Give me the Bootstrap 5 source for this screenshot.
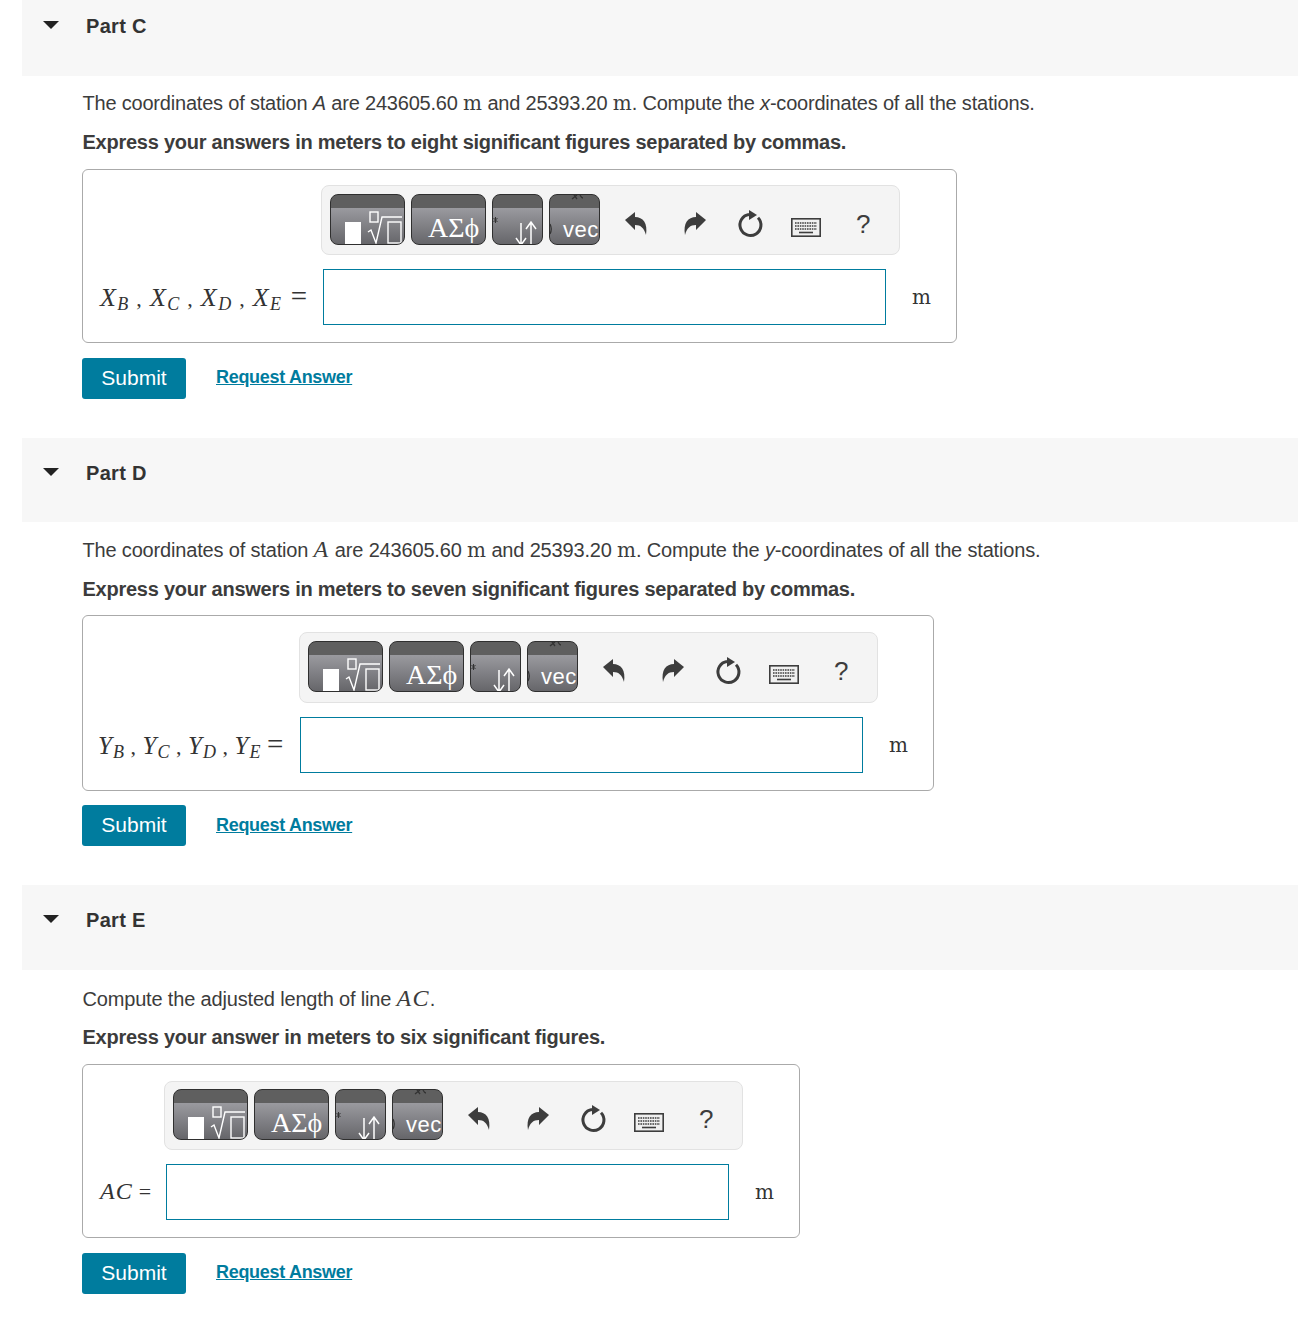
<!DOCTYPE html>
<html lang="en">
<head>
  <meta charset="UTF-8">
  <meta name="viewport" content="width=device-width, initial-scale=1.0">
  <title>Parts C to E</title>
  <link href="https://cdn.jsdelivr.net/npm/bootstrap@5.3.0/dist/css/bootstrap.min.css" rel="stylesheet">
  <style>
    body {
      background: #fff;
      color: #3c3c3c;
      font-family: "Liberation Sans", Arial, sans-serif;
      font-size: 20px;
      line-height: 28px;
      overflow-x: hidden;
    }

    .page-wrap { margin: -9px 0 0 22px; }

    .part-head {
      height: 85px;
      background: #f7f7f7;
      padding: 21px 0 0 21px;
      gap: 27px;
      font-weight: 700;
      letter-spacing: 0.3px;
      color: #333;
    }
    .part-d .part-head { height: 84px; }

    .part-caret {
      width: 0;
      height: 0;
      margin-top: 9px;
      border-style: solid;
      border-width: 8px 8px 0;
      border-color: #222 transparent transparent;
    }

    .part-body { padding: 13px 0 39px 60px; }
    .part-d .part-body { padding-top: 14px; }
    .part-e .part-body { padding-top: 15px; }
    .part-text { margin: 0 0 11px; padding-left: 0.5px; letter-spacing: -0.17px; }
    .part-c .part-text { letter-spacing: -0.2px; }
    .part-e .part-text { margin-bottom: 10px; }
    .part-ask { margin: 0 0 13px; padding-left: 0.5px; font-weight: 700; letter-spacing: -0.25px; }
    .part-d .part-ask { margin-bottom: 12px; }

    .mvar, .mrm {
      font-family: "Liberation Serif", "Times New Roman", serif;
      letter-spacing: 0;
      line-height: 1;
    }
    .mvar { font-style: italic; font-size: 24px; letter-spacing: 1.2px; }
    .mvar sub { font-size: 17px; bottom: -0.25em; letter-spacing: 0; }
    .mrm { font-size: 22px; }
    .math-label .mvar { font-size: 26px; letter-spacing: 1.4px; }
    .math-label .mvar sub { font-size: 18px; }
    .math-label .mrm { margin: 0 2.5px; }
    .part-d .math-label .mvar { font-size: 25px; letter-spacing: 1px; }
    .part-d .math-label .mrm { margin: 0 1px; }
    .part-e .math-label .mvar { font-size: 24px; letter-spacing: 1.2px; }
    .part-e .math-label .mrm { margin: 0; }
    .math-label .msign { font-size: 29px; margin-left: 4px; }
    .munit { font-family: "DejaVu Serif", serif; font-size: 20px; letter-spacing: 0; line-height: 1; }

    .answer-box {
      border: 1px solid #aaa;
      border-radius: 6px;
      padding: 15px 0 17px;
      display: grid;
      grid-template-columns: var(--label-w) 563px auto;
      row-gap: 14px;
      align-items: center;
    }
    .part-c .answer-box { --label-w: 240px; width: 875px; }
    .part-d .answer-box { --label-w: 217px; width: 852px; padding-top: 16px; }
    .part-e .answer-box { --label-w: 83px; width: 718px; padding-top: 16px; }

    .math-label { grid-column: 1; grid-row: 2; padding-left: 17px; white-space: nowrap; color: #333; }
    .part-d .math-label { padding-left: 15px; }
    .tool-bar {
      grid-column: 2;
      grid-row: 1;
      width: 579px;
      height: 70px;
      margin-left: -2px;
      padding: 8px 0 0 8px;
      background: #f4f4f4;
      border: 1px solid #e2e2e2;
      border-radius: 8px;
    }
    .part-d .tool-bar { height: 71px; margin-left: -1px; }
    .part-e .tool-bar { height: 69px; padding-top: 7px; }

    .tool-btn {
      position: relative;
      overflow: hidden;
      height: 51px;
      margin-right: 6px;
      color: #fff;
      border: 1px solid #2f2f2f;
      border-radius: 8px;
      background: linear-gradient(#5f5f5f 0 13px, #9a9a9f 13px, #66666a 100%);
    }
    .btn-wide { width: 75px; }
    .btn-thin { width: 51px; }
    .btn-glyph { position: absolute; white-space: nowrap; line-height: 1; }
    .btn-art { position: absolute; left: 0; top: 0; }
    .glyph-greek { left: 16px; top: 17px; font: 28px "Liberation Serif", serif; }
    .glyph-vec { left: 13px; top: 24px; font-size: 22px; letter-spacing: 0.5px; }

    .tool-icon { display: block; color: #3d3d3d; }
    .icon-undo { margin: 16px 0 0 18px; }
    .icon-redo { margin: 16px 0 0 35px; }
    .icon-reset { margin: 16px 0 0 30px; }
    .icon-keys { margin: 24px 0 0 26px; }
    .tool-help { margin: 17px 0 0 35px; font-size: 26px; line-height: 26px; color: #3d3d3d; }

    .answer-input {
      grid-column: 2;
      grid-row: 2;
      height: 56px;
      border: 1px solid #007c9e;
      outline: 0;
      background: #fff;
    }
    .unit-cell { grid-column: 3; grid-row: 2; padding-left: 26px; color: #333; }

    .action-row { margin-top: 15px; gap: 30px; }
    .part-d .action-row { margin-top: 14px; }
    .btn-submit {
      width: 104px;
      height: 41px;
      padding: 0 0 2px;
      border: 0;
      border-radius: 3px;
      background: #007c9e;
      color: #fff;
      font-size: 21px;
    }
    .btn-submit:hover { background: #006b88; color: #fff; }
    .answer-link {
      color: #007c9e;
      font-size: 18px;
      font-weight: 700;
      margin-top: -3px;
      letter-spacing: -0.3px;
    }
    .part-d .answer-link { margin-top: -2px; }
  </style>
</head>
<body>
  <div class="page-wrap">

    <section class="part-c">
      <div class="part-head d-flex"><span class="part-caret"></span><span>Part C</span></div>
      <div class="part-body">
        <p class="part-text">The coordinates of station <i>A</i> are 243605.60 <span class="munit">m</span> and 25393.20 <span class="munit">m</span>. Compute the <i>x</i>-coordinates of all the stations.</p>
        <p class="part-ask">Express your answers in meters to eight significant figures separated by commas.</p>
        <div class="answer-box">
          <div class="tool-bar d-flex" data-bar></div>
          <div class="math-label"><span class="mvar">X<sub>B</sub></span> <span class="mrm">,</span> <span class="mvar">X<sub>C</sub></span> <span class="mrm">,</span> <span class="mvar">X<sub>D</sub></span> <span class="mrm">,</span> <span class="mvar">X<sub>E</sub></span> <span class="mrm msign">=</span></div>
          <input class="answer-input" type="text" aria-label="Answer">
          <div class="unit-cell munit">m</div>
        </div>
        <div class="action-row d-flex align-items-center">
          <button class="btn btn-submit">Submit</button>
          <a class="answer-link" href="#">Request Answer</a>
        </div>
      </div>
    </section>

    <section class="part-d">
      <div class="part-head d-flex"><span class="part-caret"></span><span>Part D</span></div>
      <div class="part-body">
        <p class="part-text">The coordinates of station <span class="mvar">A</span> are 243605.60 <span class="munit">m</span> and 25393.20 <span class="munit">m</span>. Compute the <i>y</i>-coordinates of all the stations.</p>
        <p class="part-ask">Express your answers in meters to seven significant figures separated by commas.</p>
        <div class="answer-box">
          <div class="tool-bar d-flex" data-bar></div>
          <div class="math-label"><span class="mvar">Y<sub>B</sub></span> <span class="mrm">,</span> <span class="mvar">Y<sub>C</sub></span> <span class="mrm">,</span> <span class="mvar">Y<sub>D</sub></span> <span class="mrm">,</span> <span class="mvar">Y<sub>E</sub></span> <span class="mrm msign">=</span></div>
          <input class="answer-input" type="text" aria-label="Answer">
          <div class="unit-cell munit">m</div>
        </div>
        <div class="action-row d-flex align-items-center">
          <button class="btn btn-submit">Submit</button>
          <a class="answer-link" href="#">Request Answer</a>
        </div>
      </div>
    </section>

    <section class="part-e">
      <div class="part-head d-flex"><span class="part-caret"></span><span>Part E</span></div>
      <div class="part-body">
        <p class="part-text">Compute the adjusted length of line <span class="mvar">AC</span>.</p>
        <p class="part-ask">Express your answer in meters to six significant figures.</p>
        <div class="answer-box">
          <div class="tool-bar d-flex" data-bar></div>
          <div class="math-label"><span class="mvar">AC</span> <span class="mrm">=</span></div>
          <input class="answer-input" type="text" aria-label="Answer">
          <div class="unit-cell munit">m</div>
        </div>
        <div class="action-row d-flex align-items-center">
          <button class="btn btn-submit">Submit</button>
          <a class="answer-link" href="#">Request Answer</a>
        </div>
      </div>
    </section>
  </div>

  <template id="bar-tpl">
    <div class="tool-btn btn-wide">
      <svg class="btn-art" width="75" height="51" viewBox="0 0 75 51" fill="none" stroke="#fff" stroke-width="1.4">
        <rect x="14" y="27" width="16" height="23" fill="#fff" stroke="none"/>
        <rect x="39" y="17" width="8" height="10"/>
        <path d="M37 37l3-2 5 13 6-26h20"/>
        <rect x="57" y="27" width="13" height="21"/>
      </svg>
    </div>
    <div class="tool-btn btn-wide"><span class="btn-glyph glyph-greek">ΑΣϕ</span></div>
    <div class="tool-btn btn-thin">
      <svg class="btn-art" width="51" height="51" viewBox="0 0 51 51" fill="none">
        <path d="M.5 23l4 4M4.500 23l-4 4M2.500 22v6" stroke="#333"/>
        <path d="M28 28v21M23 43l5 7 5-7M38 50V28M33 34l5-7 5 7" stroke="#fff" stroke-width="1.500"/>
      </svg>
    </div>
    <div class="tool-btn btn-thin">
      <svg class="btn-art" width="51" height="51" viewBox="0 0 51 51" fill="none" stroke="#333" stroke-width="1.300">
        <path d="M22 4l5-4M24 0l3 4M30 0c1 2 2 3 3 3"/>
        <path d="M0 29c1.500 3 1.500 7 0 10"/>
      </svg>
      <span class="btn-glyph glyph-vec">vec</span>
    </div>
    <svg class="tool-icon icon-undo" width="24" height="26" viewBox="0 0 24 26" fill="currentColor"><path d="M1 10 11 2v5c8 0 13 6 11 18-2-7-5-10-11-10v5z"/></svg>
    <svg class="tool-icon icon-redo" width="24" height="26" viewBox="0 0 24 26" fill="currentColor"><path d="M23 10 13 2v5C5 7 0 13 2 25c2-7 5-10 11-10v5z"/></svg>
    <svg class="tool-icon icon-reset" width="28" height="30" viewBox="0 0 28 30" fill="none" stroke="currentColor" stroke-width="3"><path d="M21 7.700A10.500 10.500 0 1 1 12 4.600"/><path d="M12 0l8 5-8 5z" fill="currentColor" stroke="none"/></svg>
    <svg class="tool-icon icon-keys" width="30" height="19" viewBox="0 0 30 19" fill="#f0f0f0" stroke="currentColor"><rect x=".8" y=".8" width="28.400" height="17.400" stroke-width="1.600"/><path d="M4 5h22M4 8h22M4 11h22" stroke-width="1.600" stroke-dasharray="1.600 .8"/><path d="M8 14.500h14" stroke-width="1.600"/></svg>
    <span class="tool-help">?</span>
  </template>

  <script src="https://cdn.jsdelivr.net/npm/bootstrap@5.3.0/dist/js/bootstrap.bundle.min.js"></script>
  <script>
    const barTemplate = document.getElementById('bar-tpl');
    document.querySelectorAll('[data-bar]').forEach(bar => {
      bar.appendChild(barTemplate.content.cloneNode(true));
    });
  </script>
</body>
</html>
